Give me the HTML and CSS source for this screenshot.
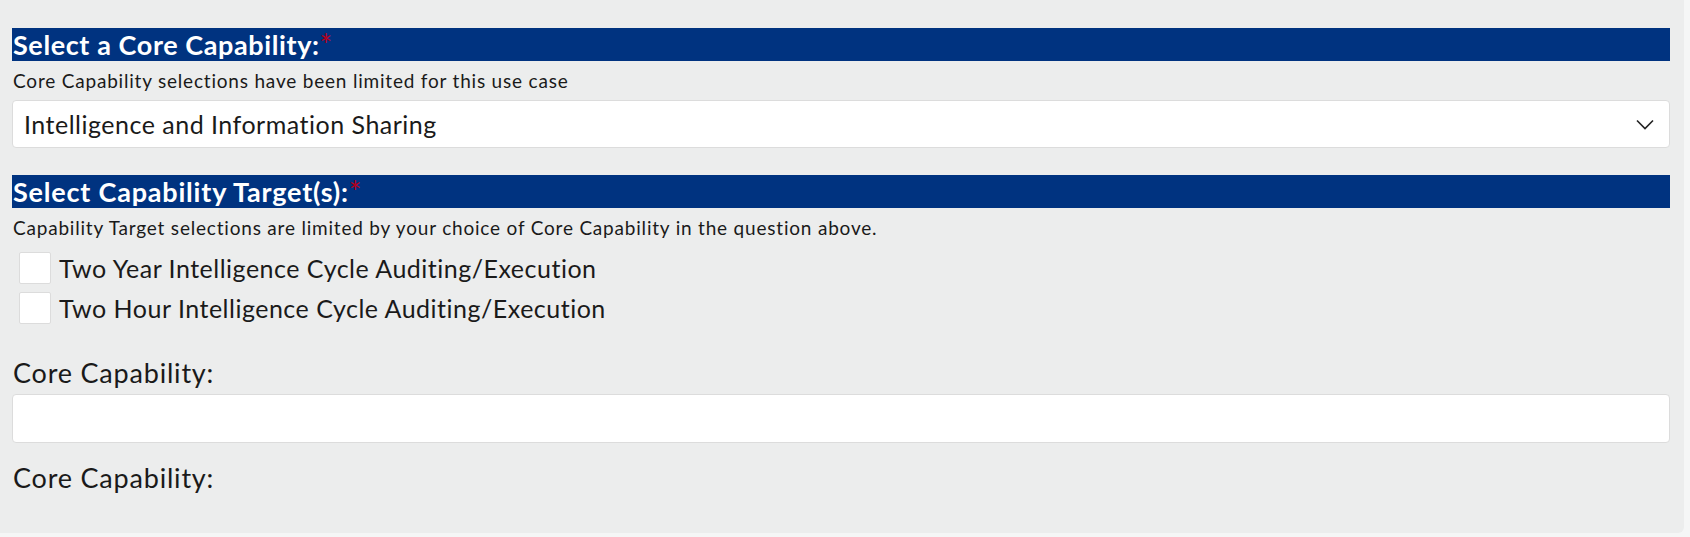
FILE: index.html
```html
<!DOCTYPE html>
<html lang="en">
<head>
    <meta charset="UTF-8">
    <meta name="viewport" content="width=device-width, initial-scale=1.0">
    <title>Core Capability</title>
    <link rel="stylesheet" href="styles.css">
</head>
<body>
    <div class="panel">
        <h2 class="bar">Select a Core Capability:<span class="req">*</span></h2>
        <p class="hint">Core Capability selections have been limited for this use case</p>
        <div class="select">
            <span>Intelligence and Information Sharing</span>
            <svg class="chevron" width="18" height="11" viewBox="0 0 18 11">
                <polyline points="1,1.5 9,9.5 17,1.5" fill="none" stroke="#222" stroke-width="1.6"/>
            </svg>
        </div>

        <h2 class="bar bar-second">Select Capability Target(s):<span class="req">*</span></h2>
        <p class="hint">Capability Target selections are limited by your choice of Core Capability in the question above.</p>
        <div class="targets">
            <label class="target"><span class="box"></span>Two Year Intelligence Cycle Auditing/Execution</label>
            <label class="target"><span class="box"></span>Two Hour Intelligence Cycle Auditing/Execution</label>
        </div>

        <div class="field-label">Core Capability:</div>
        <div class="text-input"></div>

        <div class="field-label field-label-last">Core Capability:</div>
    </div>
</body>
</html>
```

FILE: styles.css
```css
body {
    margin: 0;
    background-color: #f5f6f6;
    font-family: Lato, "Noto Sans", sans-serif;
    color: #1a1a1a;
}

.panel {
    width: 1684px;
    height: 533px;
    box-sizing: border-box;
    padding: 28px 14px 0 12px;
    background-color: #eceded;
    border-bottom-right-radius: 6px;
}

.bar {
    margin: 0;
    height: 33px;
    line-height: 33px;
    padding-left: 1px;
    background-color: #003380;
    color: #fff;
    font-size: 27px;
    font-weight: 700;
    letter-spacing: 0.6px;
}

.bar-second {
    margin-top: 27px;
    letter-spacing: 0.8px;
}

.req {
    color: #b5001c;
    font-size: 30px;
    font-weight: 400;
    vertical-align: top;
}

.hint {
    margin: 9px 0 8px 1px;
    font-size: 19px;
    line-height: 22px;
    letter-spacing: 0.8px;
}

.select {
    display: flex;
    align-items: center;
    justify-content: space-between;
    height: 48px;
    box-sizing: border-box;
    padding: 0 15px 0 11px;
    background-color: #fff;
    border: 1px solid #dcdcdc;
    border-radius: 4px;
    font-size: 25px;
    letter-spacing: 0.5px;
}

.targets {
    display: flex;
    flex-direction: column;
    gap: 8px;
    margin-top: 13px;
    padding-left: 7px;
}

.target {
    display: flex;
    align-items: center;
    gap: 8px;
    height: 32px;
    font-size: 25px;
    letter-spacing: 0.5px;
}

.box {
    width: 32px;
    height: 32px;
    box-sizing: border-box;
    background-color: #fff;
    border: 1px solid #dcdcdc;
    border-radius: 2px;
}

.field-label {
    margin: 35px 0 7px 1px;
    font-size: 27px;
    line-height: 28px;
    letter-spacing: 0.8px;
}

.field-label-last {
    margin-top: 21px;
}

.text-input {
    height: 49px;
    box-sizing: border-box;
    background-color: #fff;
    border: 1px solid #dcdcdc;
    border-radius: 4px;
}
```
